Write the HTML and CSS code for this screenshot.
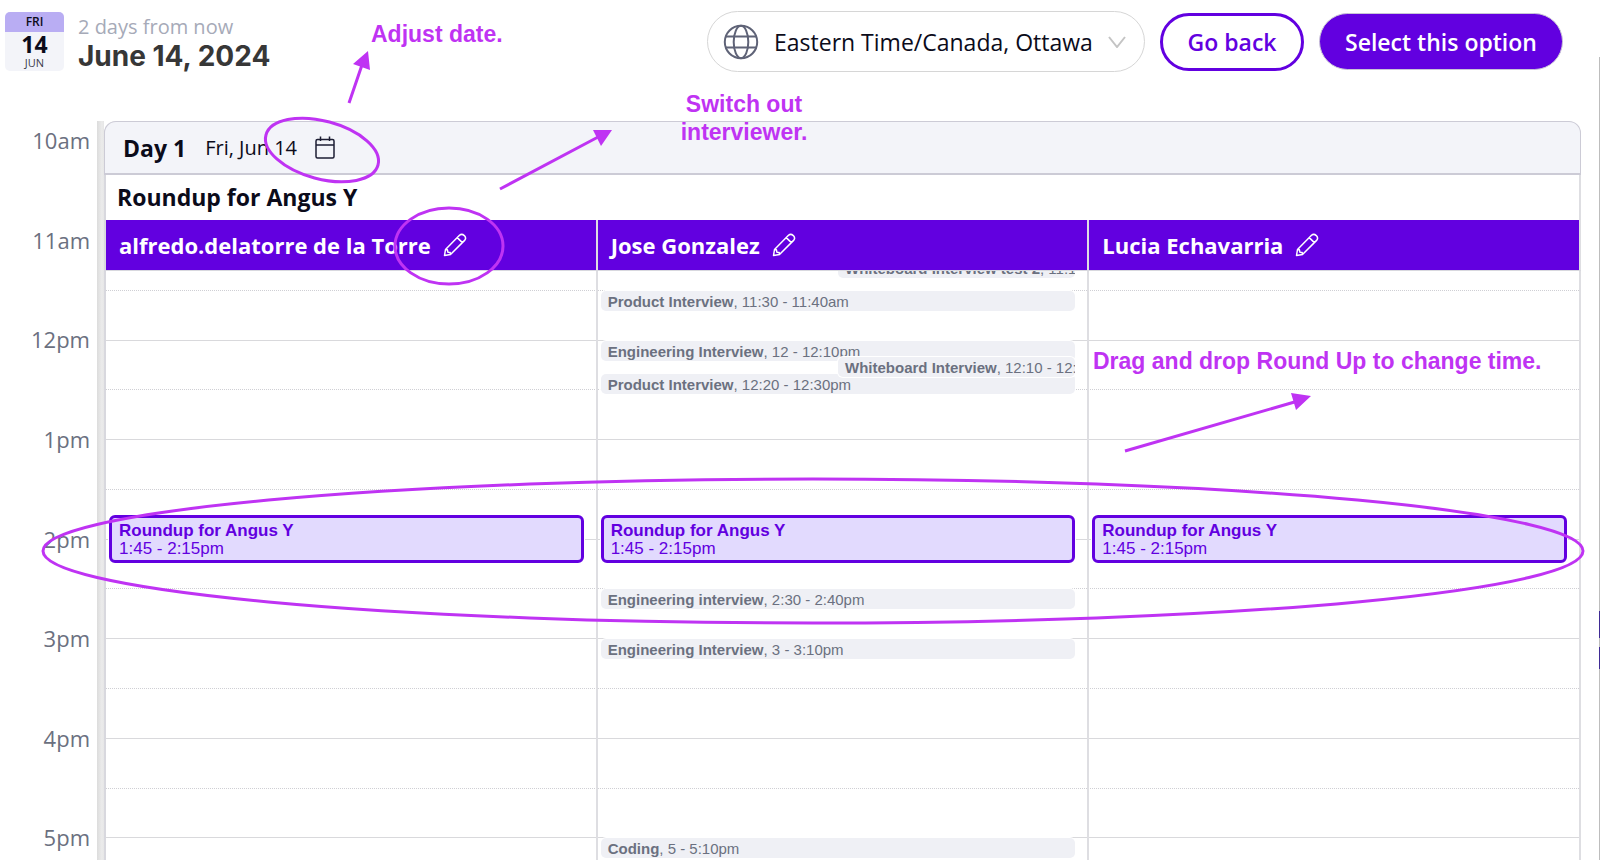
FILE: index.html
```html
<!DOCTYPE html>
<html lang="en">
<head>
<meta charset="utf-8">
<meta name="viewport" content="width=device-width, initial-scale=1">
<title>Schedule</title>
<link rel="stylesheet" href="styles.css">
</head>
<body>

<svg class="defs" width="0" height="0">
  <symbol id="pencil" viewBox="0 0 24 24">
    <path d="M1.5 22.5 L2.5 16.5 L16.5 2.3 Q18.8 0.3 21.3 2.6 Q23.7 5.2 21.6 7.4 L7.5 21.5 Z M2.5 16.5 L4.4 16.8 L4.9 19.2 L7.2 19.6 L7.5 21.5 M14.2 4.6 L19.4 9.6" />
  </symbol>
</svg>

<header class="topbar">
  <div class="date_badge">
    <div class="weekday">FRI</div>
    <div class="day_num">14</div>
    <div class="month">JUN</div>
  </div>
  <div class="date_text">
    <div class="relative">2 days from now</div>
    <h1>June 14, 2024</h1>
  </div>
  <div class="controls">
    <div class="timezone">
      <svg class="globe" viewBox="0 0 36 36">
        <circle cx="18" cy="18" r="16.2" />
        <ellipse cx="18" cy="18" rx="7.3" ry="16.2" />
        <path d="M2.8 12.5 H33.2 M2.8 23.5 H33.2" />
      </svg>
      <select aria-label="Time zone">
        <option>Eastern Time/Canada, Ottawa</option>
      </select>
      <svg class="chevron" viewBox="0 0 18 12"><path d="M1 1 L9 11 L17 1" /></svg>
    </div>
    <button class="btn outline" type="button">Go back</button>
    <button class="btn solid" type="button">Select this option</button>
  </div>
</header>

<main class="schedule">
  <div class="hours">
    <div>10am</div>
    <div>11am</div>
    <div>12pm</div>
    <div>1pm</div>
    <div>2pm</div>
    <div>3pm</div>
    <div>4pm</div>
    <div>5pm</div>
  </div>
  <div class="rail"></div>
  <div class="board">
    <div class="day_head">
      <h2>Day 1</h2>
      <span>Fri, Jun 14</span>
      <button class="icon_btn" type="button" aria-label="Change date">
        <svg class="calendar" viewBox="0 0 20 23">
          <rect x="1" y="3.5" width="18" height="18.5" rx="1.5" />
          <path d="M1 9 H19 M5.5 0.5 V5 M14.5 0.5 V5" />
        </svg>
      </button>
    </div>
    <h3 class="round_title">Roundup for Angus Y</h3>
    <div class="people">
      <div class="person">alfredo.delatorre de la Torre
        <button class="icon_btn" type="button" aria-label="Change interviewer"><svg class="pencil"><use href="#pencil" /></svg></button>
      </div>
      <div class="person">Jose Gonzalez
        <button class="icon_btn" type="button" aria-label="Change interviewer"><svg class="pencil"><use href="#pencil" /></svg></button>
      </div>
      <div class="person">Lucia Echavarria
        <button class="icon_btn" type="button" aria-label="Change interviewer"><svg class="pencil"><use href="#pencil" /></svg></button>
      </div>
    </div>

    <!-- starts at 11am, one grid row = 5 minutes -->
    <div class="timeline">
      <div class="slots">
        <i></i><i></i><i></i><i></i><i></i><i></i><i></i>
        <i></i><i></i><i></i><i></i><i></i><i></i><i></i>
      </div>
      <div class="columns">
        <div class="column">
          <div class="roundup" style="grid-row: 34 / span 6"><b>Roundup for Angus Y</b><br>1:45 - 2:15pm</div>
        </div>
        <div class="column">
          <div class="event half" style="grid-row: 3 / span 2"><b>Whiteboard Interview test 2</b>, 11:10 - 11:20am</div>
          <div class="event" style="grid-row: 7 / span 2"><b>Product Interview</b>, 11:30 - 11:40am</div>
          <div class="event" style="grid-row: 13 / span 2"><b>Engineering Interview</b>, 12 - 12:10pm</div>
          <div class="event" style="grid-row: 17 / span 2"><b>Product Interview</b>, 12:20 - 12:30pm</div>
          <div class="event half" style="grid-row: 15 / span 2"><b>Whiteboard Interview</b>, 12:10 - 12:20pm</div>
          <div class="roundup" style="grid-row: 34 / span 6"><b>Roundup for Angus Y</b><br>1:45 - 2:15pm</div>
          <div class="event" style="grid-row: 43 / span 2"><b>Engineering interview</b>, 2:30 - 2:40pm</div>
          <div class="event" style="grid-row: 49 / span 2"><b>Engineering Interview</b>, 3 - 3:10pm</div>
          <div class="event" style="grid-row: 73 / span 2"><b>Coding</b>, 5 - 5:10pm</div>
        </div>
        <div class="column">
          <div class="roundup" style="grid-row: 34 / span 6"><b>Roundup for Angus Y</b><br>1:45 - 2:15pm</div>
        </div>
      </div>
    </div>
  </div>
</main>

<div class="edge"></div>

<!-- hand-drawn notes on top of the page -->
<svg class="notes">
  <ellipse cx="322" cy="150" rx="58" ry="29" transform="rotate(15 322 150)" />
  <ellipse cx="449" cy="246" rx="54" ry="38" />
  <ellipse cx="813" cy="551" rx="770" ry="72" />
  <path class="line" d="M349 103 L363 62 M500 189 L600 136 M1125 451 L1298 401" />
  <path class="head" d="M368 51 L370 70 L353 64 Z M612 130 L601 146 L593 130 Z M1311 396 L1296 410 L1291 393 Z" />
  <text x="371" y="42">Adjust date.</text>
  <text class="mid" x="744" y="112">Switch out</text>
  <text class="mid" x="744" y="140">interviewer.</text>
  <text x="1093" y="369">Drag and drop Round Up to change time.</text>
</svg>

</body>
</html>
```
FILE: styles.css
```css
* {
  box-sizing: border-box;
}
body {
  margin: 0;
  height: 100vh;
  overflow: hidden;
  position: relative;
  background: #fff;
  color: #0b0b1a;
  font-family: "Open Sans", "Noto Sans", sans-serif;
}
h1, h2, h3 {
  margin: 0;
}
.defs {
  position: absolute;
}

/* top bar */
.topbar {
  display: flex;
  align-items: flex-start;
  height: 121px;
  padding: 11px 37px 0 5px;
}
.date_badge {
  width: 59px;
  height: 59px;
  margin-top: 1px;
  border-radius: 5px;
  overflow: hidden;
  background: #f3f4f9;
  text-align: center;
}
.weekday {
  background: #b9adf3;
  font-size: 12px;
  font-weight: 600;
  line-height: 20px;
}
.day_num {
  font-size: 23px;
  font-weight: 700;
  line-height: 24px;
}
.month {
  color: #3c3c4c;
  font-size: 11px;
  line-height: 14px;
}
.date_text {
  margin-left: 14px;
}
.relative {
  color: #a6aab8;
  font-size: 20px;
  font-weight: 500;
  line-height: 32px;
}
h1 {
  color: #373737;
  font-family: Inter, sans-serif;
  font-size: 28px;
  font-weight: 700;
  line-height: 27px;
}
.controls {
  display: flex;
  align-items: center;
  margin-left: auto;
}
.timezone {
  display: flex;
  align-items: center;
  width: 438px;
  height: 61px;
  margin-right: 15px;
  padding: 0 18px 0 15px;
  border: 1px solid #d6d6d6;
  border-radius: 31px;
}
.timezone select {
  flex: 1;
  min-width: 0;
  margin-left: 15px;
  padding: 0;
  border: 0;
  appearance: none;
  background: none;
  color: #0b0b1a;
  font-family: inherit;
  font-size: 23px;
}
.globe {
  width: 36px;
  height: 36px;
  fill: none;
  stroke: #5f6377;
  stroke-width: 2;
}
.chevron {
  width: 18px;
  height: 12px;
  fill: none;
  stroke: #c4c4c4;
  stroke-width: 2;
}
.btn {
  height: 58px;
  padding: 0;
  border: 3px solid #6200e0;
  border-radius: 29px;
  font-family: inherit;
  font-size: 23px;
  font-weight: 600;
}
.outline {
  width: 144px;
  margin-right: 15px;
  background: #fff;
  color: #6200e0;
}
.solid {
  width: 244px;
  height: 57px;
  border: 1px solid #c9c4d6;
  background: #6200e0;
  color: #fff;
}

/* schedule */
.schedule {
  display: flex;
  align-items: flex-start;
  padding-right: 19px;
}
.hours {
  display: grid;
  grid-template-rows: repeat(8, 1fr);
  width: 97px;
  height: 797px;
  padding-right: 7px;
  color: #6b7080;
  font-size: 22px;
  line-height: 38px;
  text-align: right;
}
.rail {
  align-self: stretch;
  width: 7px;
  background: linear-gradient(to right, #dcdcdc, #ebebeb 70%, #e6e6e6);
}
.board {
  flex: 1;
  border-left: 2px solid #d8d8de;
  border-radius: 12px 12px 0 0;
}
.day_head {
  display: flex;
  align-items: center;
  height: 54px;
  margin-left: -2px;
  padding-left: 18px;
  border: 1px solid #cccbd6;
  border-bottom-width: 2px;
  border-radius: 12px 12px 0 0;
  background: #f3f4f9;
}
.day_head h2 {
  font-size: 23px;
  font-weight: 700;
}
.day_head span {
  margin-left: 19px;
  font-size: 20px;
}
.icon_btn {
  padding: 0;
  border: 0;
  background: none;
  line-height: 0;
}
.calendar {
  width: 20px;
  height: 23px;
  margin-left: 18px;
  fill: none;
  stroke: #1c1c33;
  stroke-width: 1.5;
}
.round_title {
  height: 45px;
  padding-left: 11px;
  border-right: 2px solid #dedee2;
  font-size: 23px;
  font-weight: 700;
  line-height: 44px;
}
.people, .columns {
  display: grid;
  grid-template-columns: repeat(3, 1fr);
}
.people {
  position: relative;
  z-index: 1;
  border-bottom: 1px solid #d8d8de;
}
.person {
  display: flex;
  align-items: center;
  gap: 12px;
  height: 50px;
  padding-left: 13px;
  background: #6200e0;
  color: #fff;
  font-size: 22px;
  font-weight: 700;
}
.person, .column {
  border-right: 2px solid #dedee2;
}
.pencil {
  width: 24px;
  height: 24px;
  fill: none;
  stroke: #fff;
  stroke-width: 1.5;
  stroke-linejoin: round;
}
.timeline {
  display: grid;
  grid-template-rows: 697px;
  margin-top: -31px;
}
.slots, .columns {
  grid-area: 1 / 1;
}
.slots {
  display: grid;
  grid-template-rows: repeat(14, 1fr);
}
.slots i {
  border-top: 1px solid #d9d9dc;
}
.slots i:nth-child(even) {
  border-top: 1px dotted #cfcfd4;
}
.columns {
  grid-template-rows: 100%;
}
.column {
  display: grid;
  grid-template-columns: 1fr 1fr;
  grid-template-rows: repeat(84, minmax(0, 1fr));
  min-width: 0;
  padding: 0 12px 0 3px;
}
.event, .roundup {
  grid-column: 1 / 3;
  margin-top: 1px;
  box-shadow: 0 0 0 1px #fff;
  font-family: "Liberation Sans", sans-serif;
}
.event {
  height: 20px;
  padding-left: 7px;
  border-radius: 5px;
  overflow: hidden;
  background: #eff0f5;
  color: #6b7080;
  font-size: 15px;
  line-height: 22px;
  white-space: nowrap;
}
.half {
  grid-column: 2;
}
.roundup {
  height: 48px;
  padding: 4px 7px 0;
  border: 3px solid #6200e0;
  border-radius: 6px;
  background: #e2dafe;
  color: #6200e0;
  font-size: 17px;
  line-height: 18px;
}

/* sliver of the panel behind, at the right of the window */
.edge {
  position: absolute;
  top: 57px;
  right: 0;
  bottom: 0;
  width: 1px;
  background: linear-gradient(#bdbdbd 554px, #3f2a94 554px, #3f2a94 581px, #bdbdbd 581px, #bdbdbd 590px, #3f2a94 590px, #3f2a94 612px, #bdbdbd 612px);
}

.notes {
  position: absolute;
  left: 0;
  top: 0;
  z-index: 2;
  width: 100%;
  height: 100%;
  pointer-events: none;
}
.notes ellipse, .notes .line {
  fill: none;
  stroke: #bf33f3;
  stroke-width: 3;
}
.notes .head, .notes text {
  fill: #bf33f3;
}
.notes text {
  font-family: "Liberation Sans", sans-serif;
  font-size: 23px;
  font-weight: bold;
}
.notes .mid {
  text-anchor: middle;
}
```
